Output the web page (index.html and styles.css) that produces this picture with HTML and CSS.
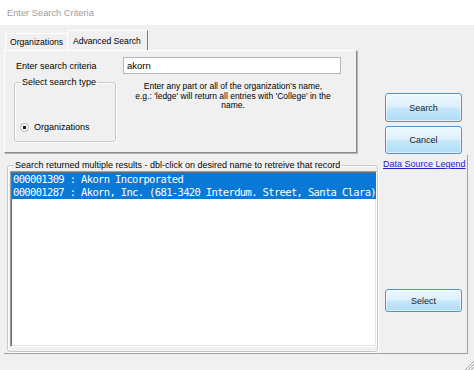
FILE: index.html
```html
<!DOCTYPE html>
<html>
<head>
    <title>Enter Search Criteria</title>
    <link rel="stylesheet" href="styles.css">
</head>
<body>
    <div class="window">
        <div class="titlebar">Enter Search Criteria</div>

        <div class="top">
            <div class="tabs">
                <div class="tabstrip">
                    <div class="tab">Organizations</div>
                    <div class="tab active">Advanced Search</div>
                </div>
                <div class="panel">
                    <div class="criteria">
                        <label class="criteria-label">Enter search criteria</label>
                        <input class="criteria-input" type="text" value="akorn">
                    </div>
                    <div class="search-row">
                        <fieldset class="typebox">
                            <legend>Select search type</legend>
                            <label class="radio"><span class="radio-dot"></span>Organizations</label>
                        </fieldset>
                        <p class="hint">
                            Enter any part or all of the organization's name,<br>
                            e.g.: 'ledge' will return all entries with 'College' in the<br>
                            name.
                        </p>
                    </div>
                </div>
            </div>
            <div class="actions">
                <button class="btn search">Search</button>
                <button class="btn cancel">Cancel</button>
            </div>
        </div>

        <div class="lower">
            <fieldset class="results">
                <legend>Search returned multiple results - dbl-click on desired name to retreive that record</legend>
                <ul class="list">
                    <li class="selected">000001309 : Akorn Incorporated</li>
                    <li class="selected">000001287 : Akorn, Inc. (681-3420 Interdum. Street, Santa Clara)</li>
                </ul>
            </fieldset>
            <div class="side">
                <a class="legend-link" href="#">Data Source Legend</a>
                <button class="btn select">Select</button>
            </div>
        </div>

        <div class="footer">
            <!-- size grip -->
            <svg class="grip" width="10" height="10" viewBox="0 0 10 10">
                <path d="M10 1L1 10M10 4L4 10M10 7L7 10" stroke="#a8a8a8" stroke-width="1"/>
            </svg>
        </div>
    </div>
</body>
</html>
```

FILE: styles.css
```css
body {
    margin: 0;
    padding: 0;
    background-color: #f0f0f0;
    color: #000;
    font: 9px "Liberation Sans", Arial, sans-serif;
}

.window {
    width: 474px;
    height: 370px;
    display: flex;
    flex-direction: column;
}

.titlebar {
    height: 25px;
    line-height: 26px;
    padding-left: 7px;
    box-sizing: border-box;
    background-color: #fff;
    color: #9c9c9c;
    font-size: 9.3px;
}

/* top half: tab control + buttons */
.top {
    display: flex;
    height: 130px;
}

.tabs {
    margin-left: 4px;
    width: 353px;
    padding-top: 5px;
}

.tabstrip {
    display: flex;
    align-items: flex-end;
    height: 20px;
    padding-left: 1px;
}

.tab {
    width: 62px;
    height: 17px;
    line-height: 16px;
    padding-left: 4px;
    box-sizing: border-box;
    border: 1px solid transparent;
    border-bottom: 0;
    border-left-color: #fff;
    border-top-color: #fff;
    font-size: 8.6px;
}

.tab.active {
    width: 81px;
    height: 20px;
    padding: 2px 0 0 5px;
    line-height: 17px;
    border-right-color: #7a7a7a;
}

.panel {
    height: 103px;
    box-sizing: border-box;
    border: 1px solid;
    border-color: #fff #8a8a8a #8a8a8a #fff;
    box-shadow: 1px 1px 0 #b4b4b4;
    padding: 6px 0 0 9px;
}

.criteria {
    display: flex;
    align-items: center;
}

.criteria-label {
    width: 109px;
    padding-left: 2px;
    box-sizing: border-box;
}

.criteria-input {
    width: 218px;
    height: 17px;
    box-sizing: border-box;
    border: 1px solid #b5b5b5;
    padding: 0 3px;
    background: #fff;
    font: 9.5px "Liberation Sans", Arial, sans-serif;
}

.search-row {
    display: flex;
}

fieldset {
    margin: 0;
    min-width: 0;
    border: 1px solid #c8c8c8;
    border-radius: 3px;
    box-shadow: inset 1px 1px 0 #fff, 1px 1px 0 #fff;
}

legend {
    padding: 0 1px;
    line-height: 11px;
}

.typebox {
    margin-top: 3px;
    width: 102px;
    height: 65px;
    box-sizing: border-box;
    padding: 0 0 0 6px;
}

.radio {
    display: flex;
    align-items: center;
    gap: 5px;
    margin: 34px 0 0 -1px;
    line-height: 11px;
}

.radio-dot {
    width: 9px;
    height: 9px;
    box-sizing: border-box;
    border: 1px solid #b8b8b8;
    border-radius: 50%;
    background: radial-gradient(circle, #1a1a1a 0 1.6px, #f6f6f6 2px);
}

.hint {
    margin: 8px 0 0 4px;
    width: 226px;
    text-align: center;
    line-height: 9.6px;
    font-size: 8.5px;
}

.actions {
    margin-left: 28px;
    padding-top: 68px;
    display: flex;
    flex-direction: column;
    gap: 4px;
}

.btn {
    width: 77px;
    height: 28px;
    padding: 0;
    border: 1px solid #5791c6;
    border-radius: 3px;
    background: linear-gradient(to bottom, #eef8fe 0%, #dcf0fc 48%, #c6e7fb 52%, #b0dcf7 100%);
    box-shadow: inset 0 0 0 1px rgba(255, 255, 255, 0.55);
    color: #1a1a1a;
    font: 9px "Liberation Sans", Arial, sans-serif;
}

.btn.search {
    height: 29px;
}

/* lower half: results list */
.lower {
    display: flex;
    margin-left: 4px;
    width: 464px;
    height: 199px;
    box-sizing: border-box;
    padding: 5px 0 0 3px;
    border-right: 1px solid #a0a0a0;
    border-bottom: 1px solid #a0a0a0;
}

.results {
    width: 371px;
    height: 192px;
    box-sizing: border-box;
    padding: 0 0 0 2px;
}

.results legend {
    margin-left: 4px;
}

.list {
    margin: 0;
    padding: 1px 0 0 1px;
    list-style: none;
    height: 176px;
    box-sizing: border-box;
    background: #fff;
    border: 1px solid;
    border-color: #9a9a9a #fff #fff #9a9a9a;
    box-shadow: inset 1px 1px 0 #6e6e6e, inset -1px -1px 0 #e4e4e4;
    font: 10.5px "DejaVu Sans Mono", monospace;
    letter-spacing: -0.65px;
}

.list li {
    height: 13px;
    line-height: 13px;
    padding-left: 1px;
    white-space: nowrap;
}

.list li.selected {
    background-color: #0a78d6;
    color: #fff;
}

.side {
    display: flex;
    flex-direction: column;
    align-items: flex-start;
}

.legend-link {
    margin: -1px 0 0 5px;
    line-height: 10px;
    color: #2222cc;
}

.btn.select {
    margin: 120px 0 0 7px;
    height: 23px;
}

.footer {
    flex: 1;
    display: flex;
    justify-content: flex-end;
    align-items: flex-end;
}

.grip {
    display: block;
}
```
